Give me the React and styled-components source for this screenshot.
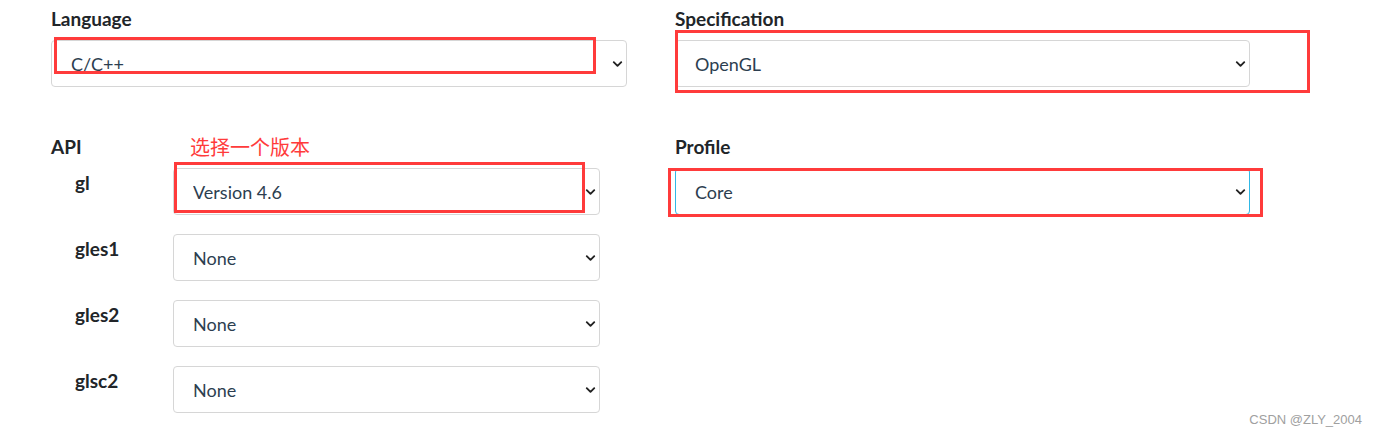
import React from 'react';
import styled, { createGlobalStyle } from 'styled-components';
import { ChevronDown } from 'lucide-react';

const GlobalStyle = createGlobalStyle`
  html, body {
    margin: 0;
    padding: 0;
    background: #fff;
  }
  body {
    font-family: Lato, "Noto Sans", "Noto Sans CJK SC", sans-serif;
    color: #212529;
  }
`;

const apis = [
  { name: 'gl', value: 'Version 4.6', mark: true },
  { name: 'gles1', value: 'None' },
  { name: 'gles2', value: 'None' },
  { name: 'glsc2', value: 'None' },
];

const Select = ({ value, focused, children }) => (
  <SelectWrap>
    <SelectBox focused={focused} defaultValue={value}>
      <option>{value}</option>
    </SelectBox>
    <Chevron>
      <ChevronDown size={15} strokeWidth={3} />
    </Chevron>
    {children}
  </SelectWrap>
);

const App = () => {
  return (
    <Page>
      <GlobalStyle />
      <Grid>
        <Field>
          <Label>Language</Label>
          <Select value="C/C++">
            <Mark left={3} top={-3} width={542} height={37} />
          </Select>
        </Field>
        <Field>
          <Label>Specification</Label>
          <Select value="OpenGL">
            <Mark left={0} top={-10} width={635} height={63} />
          </Select>
        </Field>

        <Field>
          <LabelRow>
            <Label>API</Label>
            <Note>选择一个版本</Note>
          </LabelRow>
          <ApiList>
            {apis.map((api) => (
              <ApiRow key={api.name}>
                <ApiName>{api.name}</ApiName>
                <Select value={api.value}>
                  {api.mark && <Mark left={1} top={-6} width={411} height={51} />}
                </Select>
              </ApiRow>
            ))}
          </ApiList>
        </Field>
        <Field>
          <Label>Profile</Label>
          <Select value="Core" focused>
            <Mark left={-7} top={0} width={595} height={49} />
          </Select>
        </Field>
      </Grid>
      <Watermark>CSDN @ZLY_2004</Watermark>
    </Page>
  );
};

const Page = styled.div`
  position: relative;
  width: 1377px;
  height: 435px;
  box-sizing: border-box;
  padding: 8px 0 0 51px;
  overflow: hidden;
`;

const Grid = styled.div`
  display: grid;
  grid-template-columns: 576px 575px;
  column-gap: 48px;
  row-gap: 49px;
  align-items: start;
`;

const Field = styled.div`
  display: flex;
  flex-direction: column;
`;

const Label = styled.div`
  font-size: 19px;
  font-weight: 700;
  line-height: 22px;
  color: #212529;
  margin-bottom: 10px;
  padding-top: 1px;
  margin-top: -1px;
`;

const LabelRow = styled.div`
  position: relative;
`;

const Note = styled.span`
  position: absolute;
  left: 139px;
  top: -1px;
  font-family: "Noto Sans CJK SC", sans-serif;
  font-size: 20px;
  line-height: 24px;
  color: #ff3b3b;
`;

const ApiList = styled.div`
  display: flex;
  flex-direction: column;
  gap: 19px;
`;

const ApiRow = styled.div`
  display: grid;
  grid-template-columns: 122px 427px;
  align-items: start;
`;

const ApiName = styled.div`
  padding: 4px 0 0 24px;
  font-size: 19px;
  font-weight: 700;
  line-height: 22px;
  color: #212529;
`;

const SelectWrap = styled.div`
  position: relative;
`;

const SelectBox = styled.select`
  appearance: none;
  display: block;
  width: 100%;
  height: 47px;
  box-sizing: border-box;
  padding: 0 40px 0 19px;
  font-family: Lato, "Noto Sans", sans-serif;
  font-size: 18px;
  color: #2c3e50;
  background: #fff;
  border: 1px solid ${(p) => (p.focused ? '#2fb8e6' : '#d6d6d6')};
  border-radius: 4px;
  outline: none;
`;

const Chevron = styled.span`
  position: absolute;
  right: 2px;
  top: 50%;
  transform: translateY(-50%);
  display: flex;
  color: #222;
  pointer-events: none;
`;

const Mark = styled.div`
  position: absolute;
  left: ${(p) => p.left}px;
  top: ${(p) => p.top}px;
  width: ${(p) => p.width}px;
  height: ${(p) => p.height}px;
  box-sizing: border-box;
  border: 3px solid #ff3b3b;
  pointer-events: none;
`;

const Watermark = styled.div`
  position: absolute;
  right: 15px;
  bottom: 8px;
  font-family: "Liberation Sans", "Noto Sans CJK SC", sans-serif;
  font-size: 13px;
  color: #a0a0a0;
`;

export default App;
